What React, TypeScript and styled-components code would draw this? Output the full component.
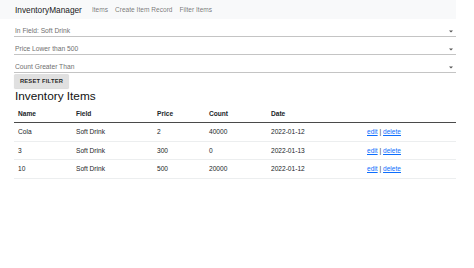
import React from 'react'
import styled, { createGlobalStyle } from 'styled-components'

const GlobalStyle = createGlobalStyle`
  body {
    margin: 0;
    background: #fff;
    font-family: "Liberation Sans", Arial, sans-serif;
    color: #212529;
  }
`

const Page = styled.div`
  width: 456px;
`

const Navbar = styled.nav`
  display: flex;
  align-items: center;
  height: 19px;
  padding-left: 15px;
  background: #f8f9fa;
`

const Brand = styled.span`
  font-size: 8.3px;
  color: #1a1a1a;
  margin-right: 10px;
`

const NavLink = styled.a`
  font-size: 6.6px;
  color: rgba(0, 0, 0, 0.55);
  margin-right: 7px;
  text-decoration: none;
`

const Content = styled.div`
  padding: 0 0 0 14px;
`

const SelectBox = styled.div`
  display: flex;
  align-items: center;
  height: 10px;
  padding-top: 7px;
  border-bottom: 1px solid #c4c4c4;
`

const Select = styled.select`
  flex: 1;
  appearance: none;
  border: none;
  background: transparent;
  padding: 0 0 0 1px;
  margin: 0;
  font-family: inherit;
  font-size: 6.7px;
  line-height: 10px;
  height: 10px;
  color: #707070;
  outline: none;
`

const Arrow = styled.svg`
  width: 4px;
  height: 3px;
  margin-right: 3px;
`

const ResetButton = styled.button`
  display: block;
  margin-top: 1px;
  width: 55px;
  height: 14px;
  padding: 0;
  border: none;
  border-radius: 1.5px;
  background: #e0e0e0;
  box-shadow: 0 1px 1px rgba(0, 0, 0, 0.15);
  font-family: inherit;
  font-weight: bold;
  font-size: 5.8px;
  letter-spacing: 0.2px;
  color: rgba(0, 0, 0, 0.87);
  text-transform: uppercase;
`

const Heading = styled.h3`
  margin: 1px 0 2.5px 1px;
  font-size: 11.8px;
  line-height: 14px;
  font-weight: 500;
  color: #111;
`

const Table = styled.table`
  width: 442px;
  border-collapse: collapse;
  table-layout: fixed;
  font-size: 6.6px;
`

const Th = styled.th<{ $w?: number }>`
  box-sizing: border-box;
  width: ${p => (p.$w ? `${p.$w}px` : 'auto')};
  height: 17px;
  padding: 0 0 0 4px;
  text-align: left;
  font-weight: bold;
  color: #212529;
  border-bottom: 1px solid #4a4a4a;
`

const Td = styled.td`
  height: 17.5px;
  padding: 0 0 0 4px;
  border-bottom: 1px solid #eceeef;
  color: #212529;
`

const Link = styled.a`
  color: #0d6efd;
  text-decoration: underline;
`

const items = [
  { name: 'Cola', field: 'Soft Drink', price: 2, count: 40000, date: '2022-01-12' },
  { name: '3', field: 'Soft Drink', price: 300, count: 0, date: '2022-01-13' },
  { name: '10', field: 'Soft Drink', price: 500, count: 20000, date: '2022-01-12' },
]

const filters = ['In Field: Soft Drink', 'Price Lower than 500', 'Count Greater Than']

function App() {
  return (
    <Page>
      <GlobalStyle />
      <Navbar>
        <Brand>InventoryManager</Brand>
        <NavLink href="#">Items</NavLink>
        <NavLink href="#">Create Item Record</NavLink>
        <NavLink href="#">Filter Items</NavLink>
      </Navbar>
      <Content>
        {filters.map(f => (
          <SelectBox key={f}>
            <Select defaultValue={f}>
              <option>{f}</option>
            </Select>
            <Arrow viewBox="0 0 4 3">
              <path d="M0 0.5 L4 0.5 L2 2.5 Z" fill="#555" />
            </Arrow>
          </SelectBox>
        ))}
        <ResetButton>Reset Filter</ResetButton>
        <Heading>Inventory Items</Heading>
        <Table>
          <thead>
            <tr>
              <Th $w={58}>Name</Th>
              <Th $w={81}>Field</Th>
              <Th $w={52}>Price</Th>
              <Th $w={62}>Count</Th>
              <Th $w={96}>Date</Th>
              <Th></Th>
            </tr>
          </thead>
          <tbody>
            {items.map((it, i) => (
              <tr key={i}>
                <Td>{it.name}</Td>
                <Td>{it.field}</Td>
                <Td>{it.price}</Td>
                <Td>{it.count}</Td>
                <Td>{it.date}</Td>
                <Td>
                  <Link href="#">edit</Link> | <Link href="#">delete</Link>
                </Td>
              </tr>
            ))}
          </tbody>
        </Table>
      </Content>
    </Page>
  )
}

export default App
